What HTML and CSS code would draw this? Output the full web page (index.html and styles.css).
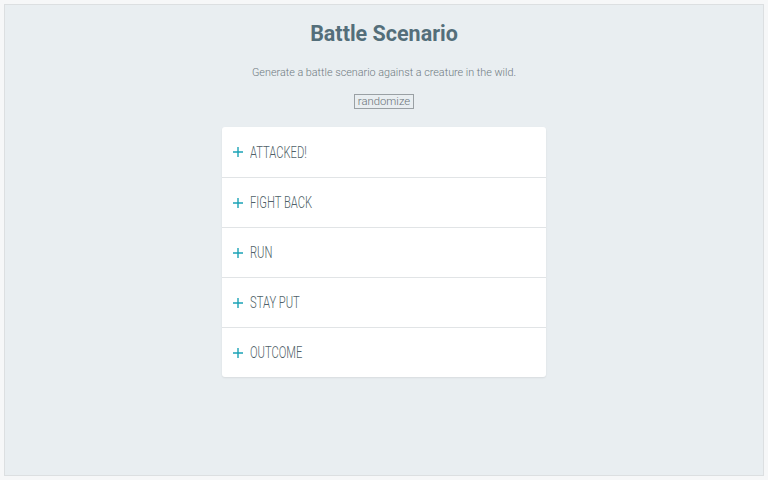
FILE: index.html
```html
<!DOCTYPE html>
<html>
<head>
<meta charset="utf-8">
<link rel="stylesheet" href="styles.css">
</head>
<body>
<div class="frame">
  <h1 class="title">Battle Scenario</h1>
  <p class="subtitle">Generate a battle scenario against a creature in the wild.</p>
  <div class="actions"><button class="btn">randomize</button></div>
  <div class="accordion">
    <div class="row"><svg class="plus" viewBox="0 0 10 10"><path d="M5 0V10M0 5H10"/></svg><span class="label">ATTACKED!</span></div>
    <div class="row"><svg class="plus" viewBox="0 0 10 10"><path d="M5 0V10M0 5H10"/></svg><span class="label">FIGHT BACK</span></div>
    <div class="row"><svg class="plus" viewBox="0 0 10 10"><path d="M5 0V10M0 5H10"/></svg><span class="label">RUN</span></div>
    <div class="row"><svg class="plus" viewBox="0 0 10 10"><path d="M5 0V10M0 5H10"/></svg><span class="label">STAY PUT</span></div>
    <div class="row"><svg class="plus" viewBox="0 0 10 10"><path d="M5 0V10M0 5H10"/></svg><span class="label">OUTCOME</span></div>
  </div>
</div>
</body>
</html>
```
FILE: styles.css
```css
html, body {
  margin: 0;
  padding: 0;
  background: #f6f7f8;
}
body {
  padding: 4px;
  height: 480px;
  box-sizing: border-box;
  font-family: Roboto, "Liberation Sans", sans-serif;
}
.frame {
  height: 472px;
  box-sizing: border-box;
  border: 1px solid #dcdfe1;
  background: #e9eef1;
  display: flex;
  flex-direction: column;
  align-items: center;
  padding-top: 16px;
}
.title {
  margin: 0;
  font-size: 21.5px;
  font-weight: 700;
  color: #546e7a;
  line-height: 26px;
}
.subtitle {
  margin: 19px 0 0;
  font-size: 10.8px;
  font-weight: 300;
  color: #6f7a81;
  line-height: 14px;
}
.actions {
  margin-top: 10px;
}
.btn {
  font-family: Roboto, "Liberation Sans", sans-serif;
  font-weight: 300;
  font-size: 11.3px;
  color: #6a7278;
  background: transparent;
  border: 1px solid #9aa0a4;
  padding: 0 3px;
  height: 15px;
  line-height: 13px;
  border-radius: 0;
}
.accordion {
  margin-top: 18px;
  width: 324px;
  background: #fff;
  border-radius: 3px;
  box-shadow: 0 1px 2px rgba(0,0,0,0.08);
  display: flex;
  flex-direction: column;
}
.row {
  height: 50px;
  box-sizing: border-box;
  display: flex;
  align-items: center;
  padding-left: 11px;
  gap: 7px;
  border-top: 1px solid #e1e4e6;
}
.row:first-child {
  border-top: none;
}
.plus {
  width: 10px;
  height: 10px;
  flex: none;
  stroke: #1ba3b6;
  stroke-width: 1.4;
  fill: none;
}
.label {
  font-family: Roboto, "Liberation Sans", sans-serif;
  font-weight: 300;
  font-size: 16px;
  color: #4f5f68;
  display: inline-block;
  transform: scaleX(0.7);
  transform-origin: left center;
  white-space: nowrap;
}
```
